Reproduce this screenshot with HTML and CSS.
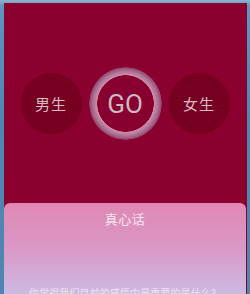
FILE: index.html
```html
<!DOCTYPE html>
<html lang="zh">
<head>
<meta charset="utf-8">
<link rel="stylesheet" href="styles.css">
</head>
<body>
<div class="screen">
  <div class="panel">
    <div class="choices">
      <div class="pick">男生</div>
      <div class="go"><span>GO</span></div>
      <div class="pick">女生</div>
    </div>
    <div class="card">
      <div class="title">真心话</div>
      <div class="question">你觉得我们目前的感情中最重要的是什么？</div>
    </div>
  </div>
</div>
</body>
</html>
```
FILE: styles.css
```css
html, body {
  margin: 0;
  padding: 0;
}
body {
  width: 250px;
  height: 294px;
  overflow: hidden;
  font-family: "Noto Sans CJK SC", "Noto Sans", sans-serif;
}
.screen {
  height: 294px;
  box-sizing: border-box;
  padding: 3px 3px 0 4px;
  background: linear-gradient(180deg, #8fb4cf 0px, #5f95bf 6px, #4c87b4 120px, #4f86b0 294px);
  overflow: hidden;
}
.panel {
  height: 291px;
  background: #8a002e;
  display: flex;
  flex-direction: column;
}
.choices {
  display: flex;
  align-items: center;
  justify-content: center;
  gap: 7px;
  padding-top: 64px;
  padding-right: 1px;
  height: 73px;
}
.pick {
  width: 61px;
  height: 61px;
  border-radius: 50%;
  background: #770022;
  color: #d4bec6;
  font-size: 15px;
  display: flex;
  align-items: center;
  justify-content: center;
  letter-spacing: 1px;
}
.go {
  width: 73px;
  height: 73px;
  border-radius: 50%;
  background: radial-gradient(circle closest-side, #870030 0, #870030 28px, #cc8fa8 28.5px, #bf84a0 30px, #ad7092 32.5px, #9d5a7e 34.5px, #923f6a 36px, rgba(138,0,46,0) 36.6px);
  display: flex;
  align-items: center;
  justify-content: center;
}
.go span {
  font-family: Roboto, "Liberation Sans", sans-serif;
  font-size: 26px;
  color: #cabcc2;
  line-height: 1;
}
.card {
  margin-top: 63px;
  flex: 1;
  margin-right: 1px;
  border-radius: 6px 6px 0 0;
  background: linear-gradient(180deg, #e088b3 0px, #da98c6 45px, #d0b2dc 80px, #cdbae0 91px);
  display: flex;
  flex-direction: column;
  align-items: center;
}
.title {
  margin-top: 7px;
  font-size: 13px;
  line-height: 18px;
  color: #f6e6f0;
  letter-spacing: 0.5px;
}
.question {
  margin-top: 58px;
  font-size: 10px;
  line-height: 14px;
  color: #efe2f2;
  letter-spacing: 0.1px;
}
```
